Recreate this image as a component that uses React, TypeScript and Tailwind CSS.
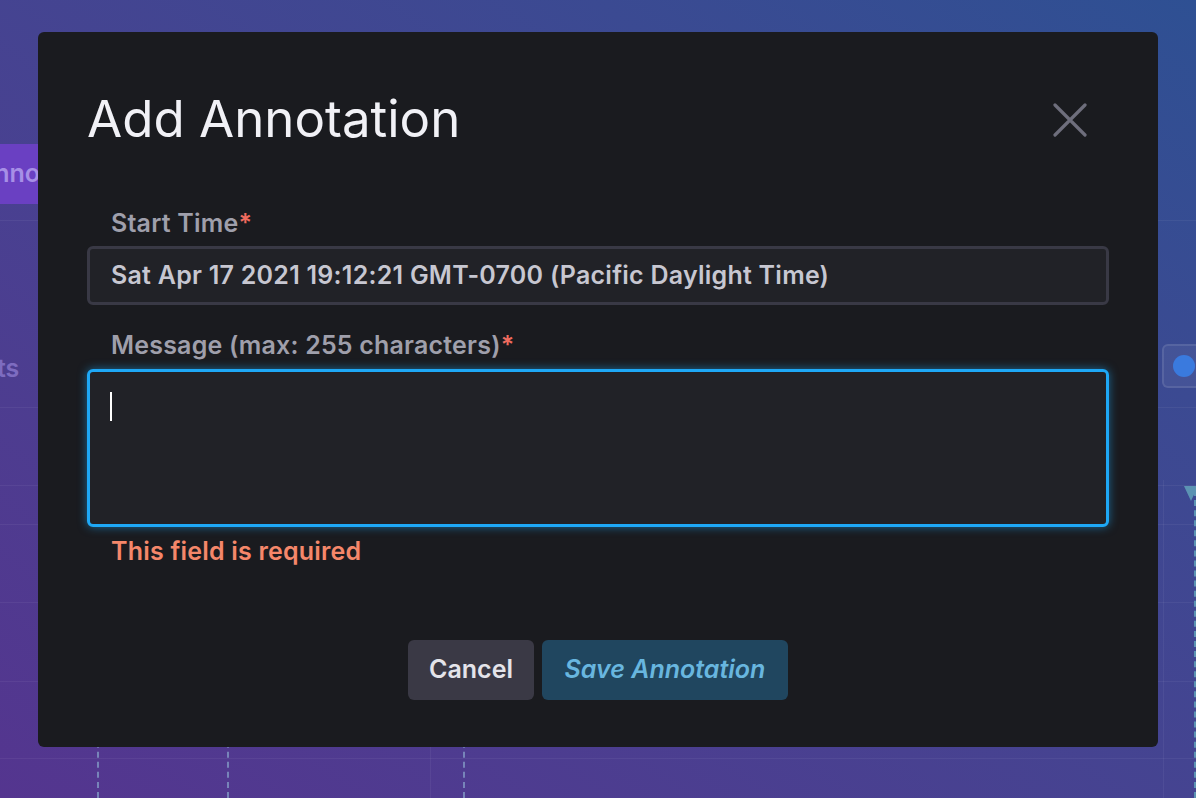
export default function App() {
  return (
    <div className="relative h-[798px] w-full overflow-hidden bg-linear-to-tr from-[#54358f] to-[#2e5093] font-['Inter',sans-serif]">
      {/* dimmed dashboard behind the overlay */}
      <div className="absolute left-0 top-[144px] flex h-[60px] w-[120px] items-center bg-[#6a40c2]">
        <span className="-ml-[24px] text-[25px] font-semibold text-[#a78fe6]">Anno</span>
      </div>
      <div className="absolute left-[-3px] top-[350px] text-[25px] font-semibold text-[#7d6cc0]">ts</div>
      <div className="absolute inset-x-0 top-[220px] flex flex-col">
        <div className="h-px bg-white/5" />
        <div className="mt-[186px] h-px bg-white/5" />
        <div className="mt-[77px] h-px bg-white/5" />
        <div className="mt-[38px] h-px bg-white/5" />
        <div className="mt-[77px] h-px bg-white/5" />
        <div className="mt-[78px] h-px bg-white/5" />
        <div className="mt-[76px] h-px bg-white/5" />
      </div>
      <div className="absolute bottom-0 left-[430px] top-[480px] w-px bg-white/5" />
      <div className="absolute bottom-0 left-[1163px] top-[480px] w-px bg-white/5" />
      <div className="absolute bottom-0 left-[97px] top-[480px] w-[2px] border-l-2 border-dashed border-[#7784b9]" />
      <div className="absolute bottom-0 left-[227px] top-[480px] w-[2px] border-l-2 border-dashed border-[#7784b9]" />
      <div className="absolute bottom-0 left-[463px] top-[480px] w-[2px] border-l-2 border-dashed border-[#7784b9]" />
      <div className="absolute bottom-0 left-[1194px] top-[490px] w-[2px] border-l-2 border-dashed border-[#5c93b3]" />
      <div className="absolute left-[1184px] top-[486px] h-0 w-0 border-x-[7px] border-t-[15px] border-x-transparent border-t-[#5c93b3]" />
      <div className="absolute left-[1162px] top-[344px] flex h-[44px] w-[60px] items-center rounded-md border-2 border-white/10 bg-white/5 pl-[9px]">
        <span className="h-[22px] w-[22px] rounded-full bg-[#3a7ade]" />
      </div>

      {/* modal overlay */}
      <div className="absolute inset-0 flex justify-center pt-[32px]">
        <div className="flex h-[715px] w-[1120px] flex-col rounded-md bg-[#1a1b1f] px-[49px] pt-[57px]">
          <div className="flex items-center justify-between">
            <h1 className="text-[51px] leading-[60px] font-normal text-[#f1f1f6]">Add Annotation</h1>
            <button className="mr-[22px] mt-[2px] text-[#6e6e7c]">
              <svg width="34" height="34" viewBox="0 0 34 34" fill="none" stroke="currentColor" strokeWidth="3.2" strokeLinecap="round">
                <path d="M2 2L32 32M32 2L2 32" />
              </svg>
            </button>
          </div>

          <label className="mt-[59px] pl-[24px] text-[25px] leading-[30px] font-semibold tracking-[0.2px] text-[#9f9fab]">
            Start Time<span className="text-[#ef6b5e]">*</span>
          </label>
          <div className="mt-[8px] flex h-[59px] items-center rounded-md border-[3px] border-[#393945] bg-[#212227] pl-[21px] text-[25px] font-semibold tracking-[0.25px] text-[#c7c7d1]">
            Sat Apr 17 2021 19:12:21 GMT-0700 (Pacific Daylight Time)
          </div>

          <label className="mt-[25px] pl-[24px] text-[25px] leading-[30px] font-semibold tracking-[0.2px] text-[#9f9fab]">
            Message (max: 255 characters)<span className="text-[#ef6b5e]">*</span>
          </label>
          <div className="mt-[9px] h-[158px] rounded-md border-[3px] border-[#1ea8f6] bg-[#212227] pl-[20px] pt-[20px] shadow-[0_0_10px_rgba(30,168,246,0.55)]">
            <div className="h-[29px] w-[2px] bg-white" />
          </div>
          <p className="mt-[9px] pl-[24px] text-[25px] leading-[30px] font-semibold tracking-[0.2px] text-[#f5876a]">
            This field is required
          </p>

          <div className="mt-[74px] flex justify-center gap-[8px]">
            <button className="h-[60px] w-[126px] rounded-md bg-[#3a3945] text-[25px] font-semibold text-[#e4e4ea]">
              Cancel
            </button>
            <button className="h-[60px] w-[246px] rounded-md bg-[#20465f] text-[25px] font-semibold italic text-[#68b6df]">
              Save Annotation
            </button>
          </div>
        </div>
      </div>
    </div>
  );
}
